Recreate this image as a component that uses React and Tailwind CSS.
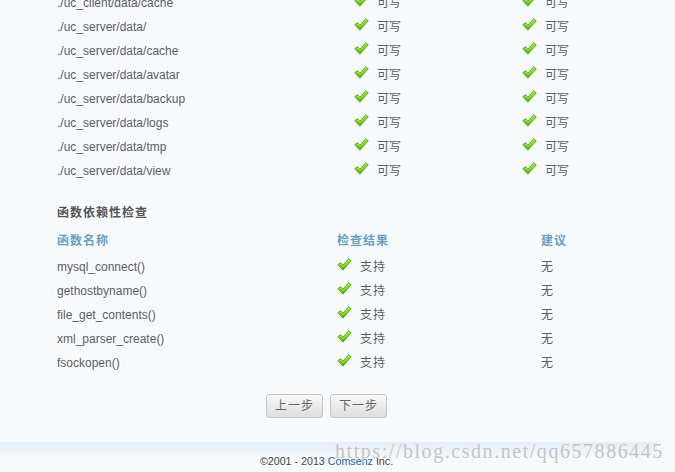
import React from 'react';

const dirs = [
    './uc_client/data/cache',
    './uc_server/data/',
    './uc_server/data/cache',
    './uc_server/data/avatar',
    './uc_server/data/backup',
    './uc_server/data/logs',
    './uc_server/data/tmp',
    './uc_server/data/view',
];

const funcs = ['mysql_connect()', 'gethostbyname()', 'file_get_contents()', 'xml_parser_create()', 'fsockopen()'];

const font = { fontFamily: '"Liberation Sans", "Noto Sans CJK SC", sans-serif' };

const Check = () => (
    <svg width="15" height="13" viewBox="0 0 15 13" className="-mt-[5px] shrink-0">
        <defs>
            <linearGradient id="ok" x1="0" y1="0" x2="0" y2="1">
                <stop offset="0" stopColor="#a6ea3a" />
                <stop offset="1" stopColor="#55b012" />
            </linearGradient>
        </defs>
        <path d="M0.8 6.6 L3.6 4.6 L5.8 7.4 L11.6 0.8 L14.2 2.8 L5.9 12.2 Z" fill="url(#ok)" stroke="#58a615" strokeWidth="0.9" strokeLinejoin="round" />
        <path d="M2 6.8 L3.5 5.8 L5.9 8.6 L11.7 2.2" fill="none" stroke="#c8f57a" strokeWidth="0.7" opacity="0.7" />
    </svg>
);

const Status = ({ label }) => (
    <div className="flex items-center gap-[8px]">
        <Check />
        <span>{label}</span>
    </div>
);

const Btn = ({ children }) => (
    <button className="w-[57px] h-[24px] rounded-[3px] border border-[#c4c4c4] bg-gradient-to-b from-[#f8f8f8] to-[#dedede] text-[12px] text-[#666] tracking-[1px]">
        {children}
    </button>
);

export default function App() {
    return (
        <div className="min-h-[472px] bg-[#f7fafd] text-[12px] text-[#5e5e5e] overflow-hidden relative" style={font}>
            <div className="w-[657px] pl-[57px]">
                <div className="-mt-[9px]">
                    {dirs.map((d) => (
                        <div key={d} className="grid grid-cols-[297px_168px_1fr] items-center h-[24px]">
                            <span>{d}</span>
                            <Status label="可写" />
                            <Status label="可写" />
                        </div>
                    ))}
                </div>

                <h3 className="mt-[20px] h-[20px] leading-[20px] font-bold tracking-[1px] text-[#555]">函数依赖性检查</h3>

                <div className="mt-[6px] grid grid-cols-[280px_204px_1fr] items-center h-[24px] font-bold text-[#6a9fc0] tracking-[1px]">
                    <span>函数名称</span>
                    <span>检查结果</span>
                    <span>建议</span>
                </div>
                <div className="mt-[2px]">
                    {funcs.map((f) => (
                        <div key={f} className="grid grid-cols-[280px_204px_1fr] items-center h-[24px]">
                            <span>{f}</span>
                            <div className="flex items-center gap-[8px]">
                                <Check />
                                <span className="tracking-[1px]">支持</span>
                            </div>
                            <span>无</span>
                        </div>
                    ))}
                </div>
            </div>

            <div className="w-[653px] mt-[19px] flex justify-center gap-[7px]">
                <Btn>上一步</Btn>
                <Btn>下一步</Btn>
            </div>

            <div className="w-[657px] mt-[24px] h-[14px] bg-gradient-to-b from-[#e3eef8] to-[#f3f8fc]" />
            <div className="w-[653px] -mt-[3px] h-[20px] flex justify-center items-start text-[10.7px] text-[#444]">
                <span>
                    ©2001 - 2013 <span className="text-[#1e5fa6]">Comsenz</span> Inc.
                </span>
            </div>

            <div
                className="absolute left-[335px] top-[439px] text-[20px] leading-[24px] text-[#c4c4c4] tracking-[1.55px] whitespace-nowrap"
                style={{ fontFamily: '"Liberation Serif", serif' }}
            >
                https://blog.csdn.net/qq657886445
            </div>
        </div>
    );
}
